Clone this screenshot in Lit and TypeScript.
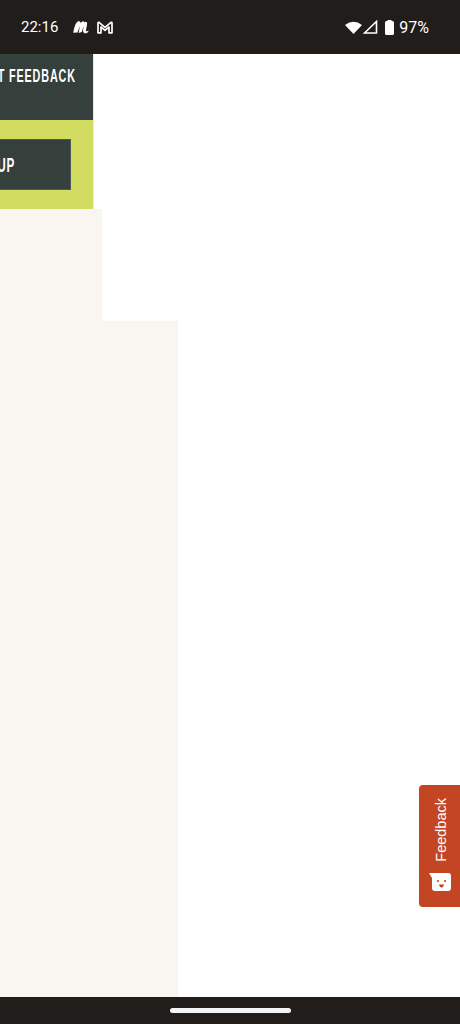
import { LitElement, html, css } from "lit";
import { customElement } from "lit/decorators.js";

@customElement("app-root")
export class AppRoot extends LitElement {
  static styles = css`
    :host { display: flex; flex-direction: column; width: 460px; height: 1024px; position: relative; overflow: hidden; background: #fff; font-family: "Roboto", "Liberation Sans", sans-serif; }
    .status { height: 54px; flex: none; background: #211d1a; color: #fff; display: flex; align-items: center; justify-content: space-between; padding: 0 31px 0 21px; box-sizing: border-box; font-size: 15px; }
    .status-left, .status-right { display: flex; align-items: center; }
    .status-left { gap: 15px; }
    .apps { display: flex; align-items: center; gap: 8px; }
    .pct { font-size: 16px; margin-left: 5px; }
    .sig { margin: 0 7px 0 1px; }
    .page { flex: 1; display: flex; flex-direction: column; min-height: 0; }
    .nav { width: 94px; height: 155px; flex: none; border-right: 1px solid #e8e8f0; box-sizing: border-box; }
    .head { height: 66px; background: #353f3c; display: flex; justify-content: flex-end; padding: 12px 17px 0 0; box-sizing: border-box; overflow: hidden; }
    .label { font-family: "Liberation Sans", sans-serif; font-weight: 700; color: #fff; white-space: nowrap; letter-spacing: 1.4px; font-size: 18px; line-height: 20px; flex: none; transform: scaleX(0.6); transform-origin: right center; }
    .cta { height: 89px; background: #d2dc60; padding: 19px 22px 19px 0; box-sizing: border-box; }
    .btn { height: 51px; background: #353f3c; border: 1px solid #4a5a55; border-left: 0; box-sizing: border-box; display: flex; justify-content: flex-end; align-items: center; padding-right: 55px; overflow: hidden; }
    .btn .label { font-size: 21px; transform: scaleX(0.56); }
    .band-a { width: 102px; height: 112px; flex: none; background: #f9f6f1; }
    .band-b { width: 178px; flex: 1; background: #f9f6f1; }
    .bar { height: 27px; flex: none; background: #211d1a; display: flex; justify-content: center; align-items: center; padding-bottom: 1px; box-sizing: border-box; }
    .pill { width: 121px; height: 5px; border-radius: 3px; background: #f4f4f4; }
    .tab { position: absolute; left: 419px; top: 785px; width: 41px; height: 122px; background: #c44524; border-radius: 4px 0 0 4px; color: #fff; display: flex; flex-direction: column; align-items: center; justify-content: flex-end; padding-bottom: 16px; box-sizing: border-box; gap: 11px; }
    .tab span { writing-mode: vertical-rl; transform: rotate(180deg); font-size: 14.5px; line-height: 16px; margin-left: 3px; font-family: "Liberation Sans", sans-serif; }
    svg { display: block; }
  `;

  render() {
    return html`
      <div class="status">
        <div class="status-left">
          <div>22:16</div>
          <div class="apps">
            <svg width="16" height="14" viewBox="0 0 16 14"><path d="M0.3 12.8 C1 8 2.5 2.5 5 1.5 C6.8 0.8 8 2 7.4 3.6 C8.8 1.2 11 0.6 11.4 2.4 C13 0.8 14.6 2 14 5 L13 9.8 C13 11.8 14.4 11.6 15.7 10.2 C15.4 13.8 10.4 14.6 10 11 L10.6 6 L8.8 12 L5.6 13 L7 6 L4.4 12.6 Z" fill="#fff"/></svg>
            <svg width="16" height="13" viewBox="0 0 16 13"><path d="M1 11.8 V2.2 Q1 1 2 1.3 L8 6.4 L14 1.3 Q15 1 15 2.2 V11.8 H12 V6 L8 9.3 L4 6 V11.8 Z" fill="none" stroke="#fff" stroke-width="1.7" stroke-linejoin="round"/></svg>
          </div>
        </div>
        <div class="status-right">
          <svg width="17" height="13" viewBox="0 0 17 13"><path d="M8.5 13 L0 4 Q8.5 -2.5 17 4 Z" fill="#fff"/></svg>
          <svg class="sig" width="15" height="14" viewBox="0 0 15 14"><path d="M1.5 13 L13.5 1.5 V13 Z" fill="none" stroke="#fff" stroke-width="1.6"/></svg>
          <svg width="9" height="15" viewBox="0 0 9 15"><path d="M2.5 1 V0 H6.5 V1 H7.5 Q9 1 9 2.5 V13.5 Q9 15 7.5 15 H1.5 Q0 15 0 13.5 V2.5 Q0 1 1.5 1 Z" fill="#fff"/></svg>
          <div class="pct">97%</div>
        </div>
      </div>
      <div class="page">
        <div class="nav">
          <div class="head"><div class="label">GET FEEDBACK</div></div>
          <div class="cta"><div class="btn"><div class="label">SIGN UP</div></div></div>
        </div>
        <div class="band-a"></div>
        <div class="band-b"></div>
      </div>
      <div class="bar"><div class="pill"></div></div>
      <div class="tab">
        <span>Feedback</span>
        <svg width="22" height="18" viewBox="0 0 22 18"><path d="M0 0 H19 Q22 0 22 3 V15 Q22 18 19 18 H6 Q3 18 3 15 V5 Z" fill="#fff"/><circle cx="9" cy="8" r="1.1" fill="#c44524"/><circle cx="16" cy="8" r="1.1" fill="#c44524"/><path d="M10 11.5 H15 Q14.5 14.5 12.5 14.5 Q10.5 14.5 10 11.5 Z" fill="#c44524"/></svg>
      </div>
    `;
  }
}
